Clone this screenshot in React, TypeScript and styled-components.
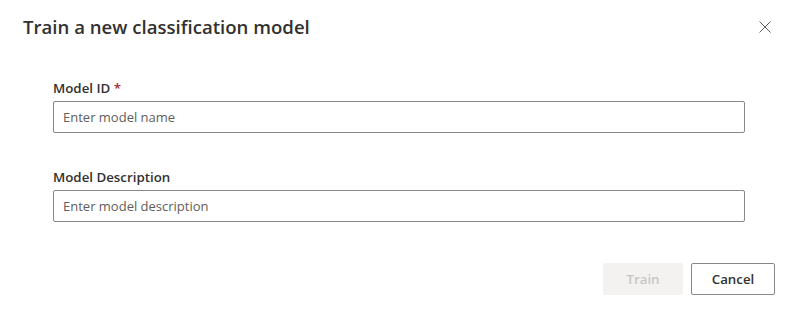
import styled, { createGlobalStyle } from 'styled-components';

const GlobalStyle = createGlobalStyle`
  body {
    margin: 0;
    background: #ffffff;
    font-family: "Segoe UI", "Open Sans", sans-serif;
    color: #323130;
  }
`;

const App: React.FC = () => {
  return (
    <>
      <GlobalStyle />
      <Dialog>
        <Header>
          <Title>Train a new classification model</Title>
          <CloseButton aria-label="Close">
            <svg width="12" height="12" viewBox="0 0 12 12">
              <path d="M0.5 0.5 L11.5 11.5 M11.5 0.5 L0.5 11.5" stroke="#605e5c" strokeWidth="1" fill="none" />
            </svg>
          </CloseButton>
        </Header>
        <Form>
          <Field>
            <Label>
              Model ID <Required>*</Required>
            </Label>
            <Input placeholder="Enter model name" />
          </Field>
          <Field>
            <Label>Model Description</Label>
            <Input placeholder="Enter model description" />
          </Field>
        </Form>
        <Footer>
          <Button disabled>Train</Button>
          <Button $wide>Cancel</Button>
        </Footer>
      </Dialog>
    </>
  );
};

export default App;

const Dialog = styled.div`
  width: 799px;
  height: 317px;
  box-sizing: border-box;
  display: flex;
  flex-direction: column;
`;

const Header = styled.div`
  display: flex;
  align-items: flex-start;
  justify-content: space-between;
  padding: 13px 28px 0 23px;
`;

const Title = styled.h1`
  margin: 0;
  font-size: 18.6px;
  line-height: 28px;
  font-weight: 600;
  color: #323130;
`;

const CloseButton = styled.button`
  border: none;
  background: transparent;
  padding: 0;
  margin-top: 8px;
  width: 12px;
  height: 12px;
  display: flex;
  cursor: pointer;
`;

const Form = styled.div`
  display: flex;
  flex-direction: column;
  gap: 34px;
  padding: 37px 54px 0 53px;
`;

const Field = styled.div`
  display: flex;
  flex-direction: column;
  gap: 3px;
`;

const Label = styled.label`
  font-size: 13.3px;
  line-height: 20px;
  font-weight: 600;
  color: #323130;
`;

const Required = styled.span`
  color: #a4262c;
`;

const Input = styled.input`
  box-sizing: border-box;
  height: 32px;
  width: 100%;
  border: 1px solid #8a8886;
  border-radius: 2px;
  padding: 0 9px;
  font-family: inherit;
  font-size: 13px;
  color: #323130;
  outline: none;

  &::placeholder {
    color: #605e5c;
  }
`;

const Footer = styled.div`
  display: flex;
  justify-content: flex-end;
  gap: 8px;
  padding: 41px 24px 0 0;
`;

const Button = styled.button<{ $wide?: boolean }>`
  box-sizing: border-box;
  height: 32px;
  min-width: ${(p) => (p.$wide ? '84px' : '80px')};
  padding: 0 16px;
  border-radius: 2px;
  border: 1px solid #8a8886;
  background: #ffffff;
  color: #323130;
  font-family: inherit;
  font-size: 13.3px;
  font-weight: 600;

  &:disabled {
    background: #f3f2f1;
    border-color: #f3f2f1;
    color: #c8c6c4;
  }
`;
